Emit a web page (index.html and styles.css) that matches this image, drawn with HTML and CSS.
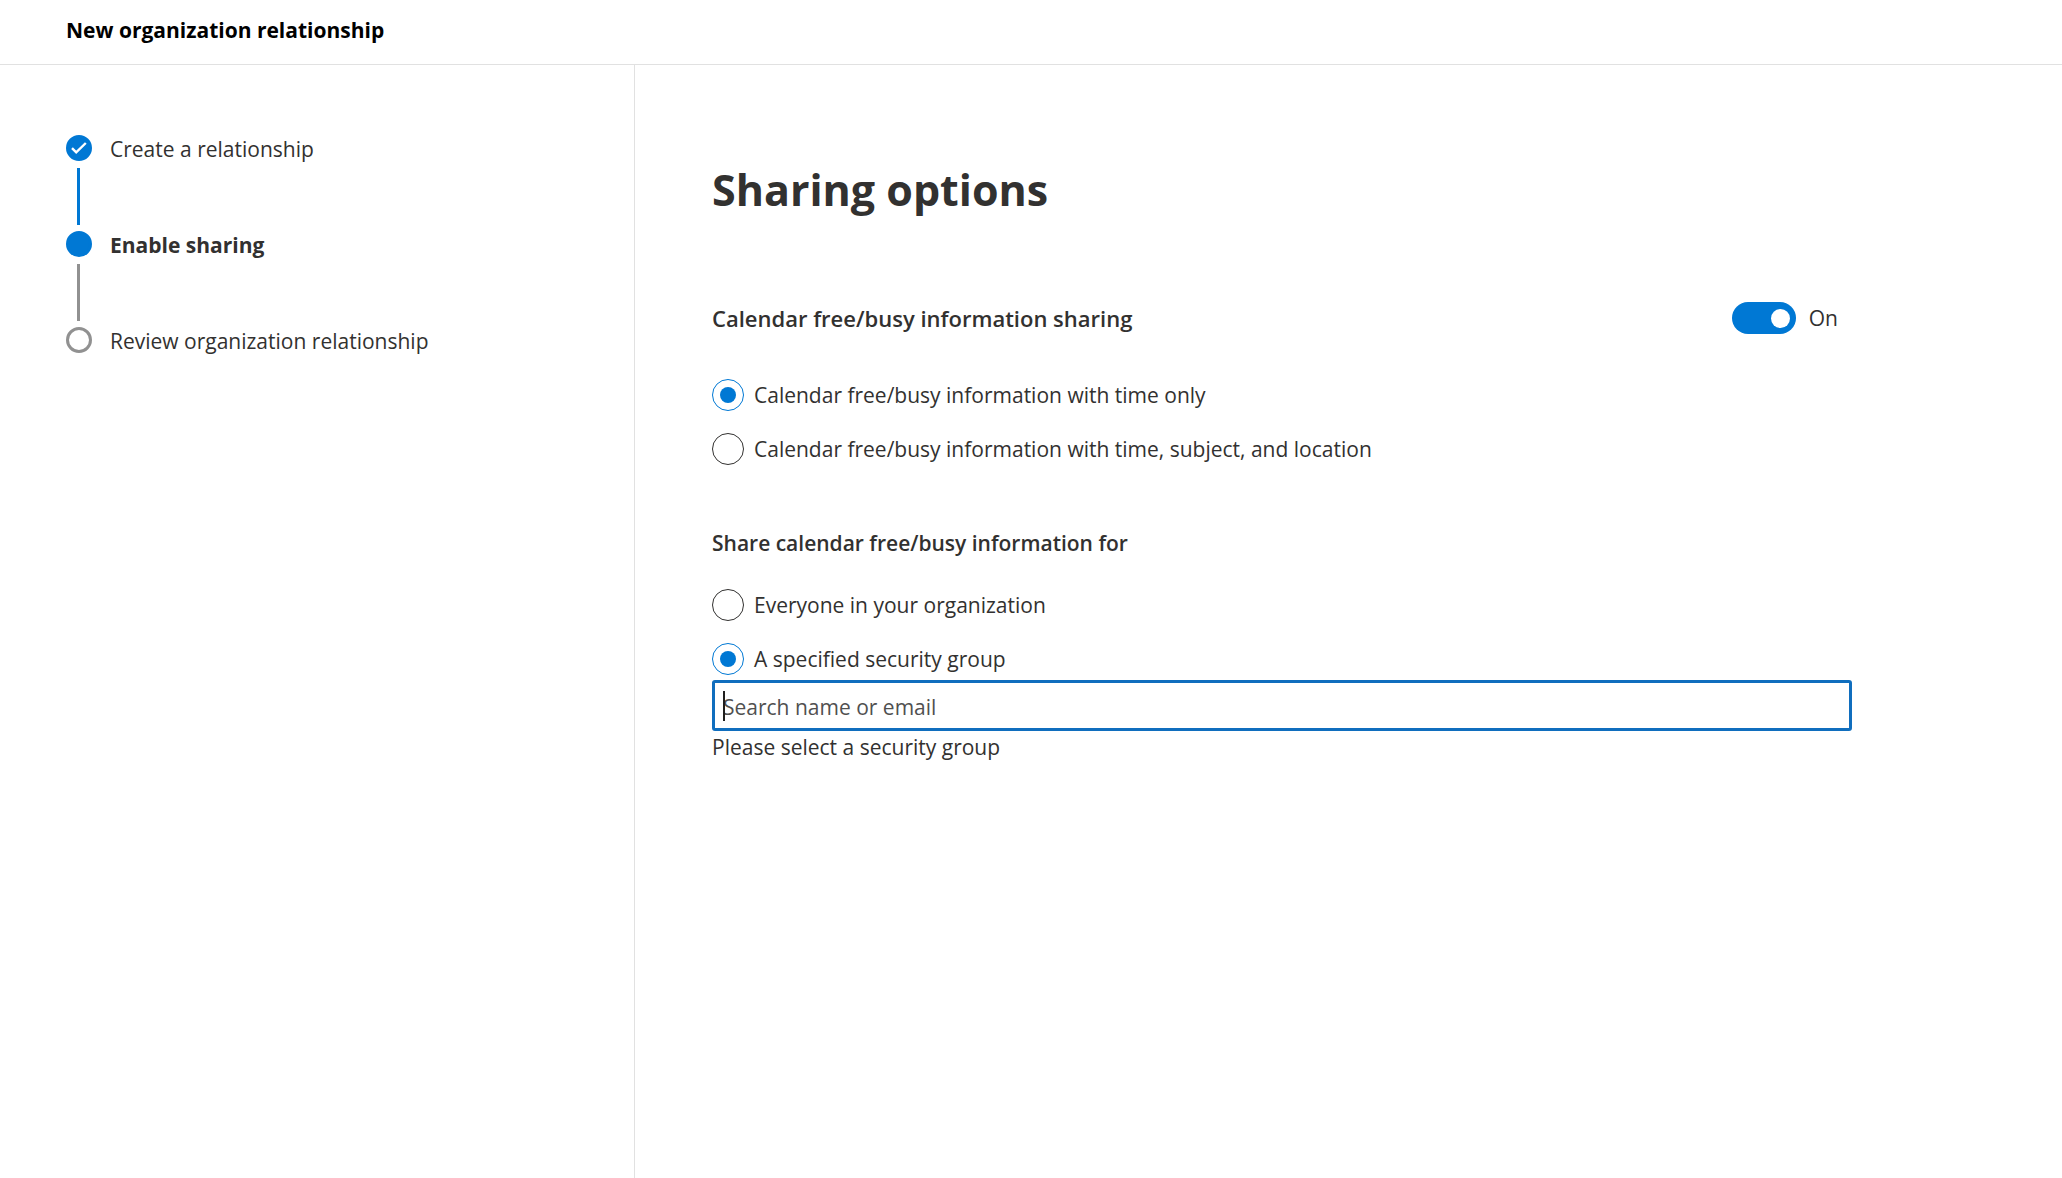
FILE: index.html
```html
<!DOCTYPE html>
<html lang="en">
<head>
    <meta charset="UTF-8">
    <meta name="viewport" content="width=device-width, initial-scale=1.0">
    <title>New organization relationship</title>
    <link rel="stylesheet" href="styles.css">
</head>
<body>
<header class="page-header">
    <span class="page-title">New organization relationship</span>
</header>

<div class="layout">
    <nav class="sidebar">
        <ol class="steps">
            <li class="step done">
                <span class="step-marker">
                    <svg class="check" viewBox="0 0 26 26"><path d="M6 13.2l4.2 4.2L19.8 8"/></svg>
                </span>
                <span class="step-label">Create a relationship</span>
            </li>
            <li class="step current" aria-current="step">
                <span class="step-marker"></span>
                <span class="step-label">Enable sharing</span>
            </li>
            <li class="step">
                <span class="step-marker"></span>
                <span class="step-label">Review organization relationship</span>
            </li>
        </ol>
    </nav>

    <main class="content">
        <h1>Sharing options</h1>

        <form>
            <div class="section-header">
                <h2>Calendar free/busy information sharing</h2>
                <div class="toggle-group">
                    <input type="checkbox" role="switch" id="sharing" class="toggle" checked>
                    <label for="sharing">On</label>
                </div>
            </div>

            <div class="radio-group">
                <div class="radio-row">
                    <input type="radio" name="level" id="levelTime" checked>
                    <label for="levelTime">Calendar free/busy information with time only</label>
                </div>
                <div class="radio-row">
                    <input type="radio" name="level" id="levelDetails">
                    <label for="levelDetails">Calendar free/busy information with time, subject, and location</label>
                </div>
            </div>

            <h3>Share calendar free/busy information for</h3>

            <div class="radio-group">
                <div class="radio-row">
                    <input type="radio" name="scope" id="scopeAll">
                    <label for="scopeAll">Everyone in your organization</label>
                </div>
                <div class="radio-row">
                    <input type="radio" name="scope" id="scopeGroup" checked>
                    <label for="scopeGroup">A specified security group</label>
                </div>
            </div>

            <div class="search-box">
                <input type="text" id="groupSearch" class="search-input" placeholder="Search name or email" aria-label="Search name or email" aria-describedby="groupHint">
                <span class="caret"></span>
            </div>
            <p class="hint" id="groupHint">Please select a security group</p>
        </form>
    </main>
</div>
</body>
</html>
```
FILE: styles.css
```css
*,
*::before,
*::after {
    box-sizing: border-box;
}

body {
    margin: 0;
    min-height: 100vh;
    display: flex;
    flex-direction: column;
    font-family: "Segoe UI", "Open Sans", "Noto Sans", sans-serif;
    font-size: 21px;
    line-height: 32px;
    color: #323130;
    background-color: #fff;
}

.page-header {
    padding: 14px 66px 18px;
    border-bottom: 1px solid #e1e1e1;
}

.page-title {
    font-weight: 700;
    color: #000;
}

.layout {
    flex: 1;
    display: flex;
}

.sidebar {
    flex: 0 0 635px;
    padding: 68px 66px;
    border-right: 1px solid #e1e1e1;
}

.steps {
    margin: 0;
    padding: 0;
    list-style: none;
}

.step {
    display: flex;
    gap: 18px;
    min-height: 96px;
}

/* marker column: circle on top, connector line below */
.step-marker {
    display: flex;
    flex-direction: column;
    align-items: center;
    width: 26px;
    padding-top: 2px;
    color: #919191;
}

.step-marker::before {
    content: "";
    flex: none;
    width: 26px;
    height: 26px;
    border: 3px solid currentColor;
    border-radius: 50%;
}

.step-marker::after {
    content: "";
    width: 3px;
    height: 57px;
    margin: 7px 1px 0 0;
    background-color: currentColor;
}

.step:last-child .step-marker::after {
    display: none;
}

.done .step-marker {
    color: #0078d4;
}

.done .step-marker::before,
.current .step-marker::before {
    border-color: #0078d4;
    background-color: #0078d4;
}

.check {
    position: absolute;
    width: 26px;
    height: 26px;
    fill: none;
    stroke: #fff;
    stroke-width: 2.4;
}

.current .step-label {
    font-weight: 700;
}

.content {
    flex: 1;
    padding: 93px 210px 60px 77px;
}

h1 {
    margin: 0;
    font-size: 43px;
    line-height: 64px;
    font-weight: 700;
}

h2,
h3 {
    margin: 0;
    font-weight: 600;
}

h2 {
    font-size: 22px;
}

h3 {
    margin: 62px 0 30px;
    font-size: 21px;
}

.section-header {
    display: flex;
    justify-content: space-between;
    align-items: center;
    margin: 80px 0 45px;
}

.toggle-group {
    display: flex;
    align-items: center;
    gap: 13px;
    padding-right: 14px;
}

.toggle {
    appearance: none;
    display: flex;
    align-items: center;
    width: 64px;
    height: 32px;
    margin: 0;
    padding: 0 6px;
    border-radius: 16px;
    background-color: #8a8886;
}

.toggle::before {
    content: "";
    width: 19px;
    height: 19px;
    border-radius: 50%;
    background-color: #fff;
}

.toggle:checked {
    justify-content: flex-end;
    background-color: #0078d4;
}

.radio-group {
    display: flex;
    flex-direction: column;
    gap: 22px;
}

.radio-row {
    display: flex;
    align-items: center;
    gap: 10px;
}

.radio-row input {
    appearance: none;
    display: grid;
    place-items: center;
    width: 32px;
    height: 32px;
    margin: 0;
    border: 1px solid #323130;
    border-radius: 50%;
}

.radio-row input:checked {
    border-color: #0078d4;
}

.radio-row input:checked::before {
    content: "";
    width: 16px;
    height: 16px;
    border-radius: 50%;
    background-color: #0078d4;
}

.search-box {
    position: relative;
    margin-top: 5px;
}

.search-input {
    display: block;
    width: 100%;
    height: 51px;
    padding: 2px 8px 0;
    border: 3px solid #106ebe;
    border-radius: 3px;
    outline: none;
    font: inherit;
    color: inherit;
}

.search-input::placeholder {
    color: #505050;
    opacity: 1;
}

.caret {
    position: absolute;
    left: 11px;
    top: 11px;
    width: 2px;
    height: 30px;
    background-color: #201f1e;
}

.hint {
    margin: 0;
}
```
